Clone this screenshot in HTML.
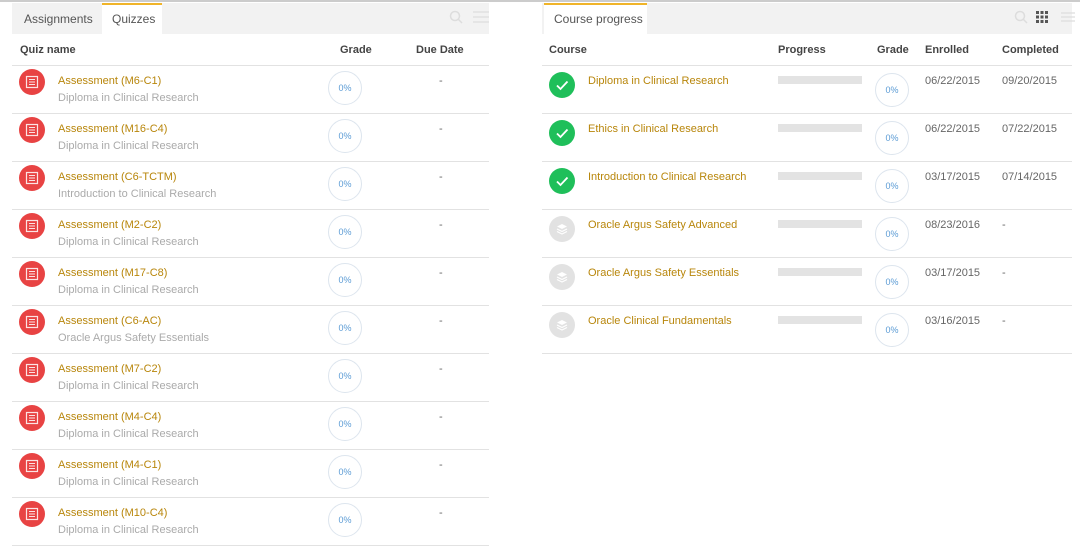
<!DOCTYPE html>
<html><head><meta charset="utf-8"><style>
*{box-sizing:border-box;margin:0;padding:0}
body{width:1080px;height:548px;background:#fff;font-family:"Liberation Sans",sans-serif;position:relative;overflow:hidden;color:#555}
.topline{position:absolute;left:0;top:0;width:1080px;height:2px;background:#ccc}
.abs{position:absolute}
.tabbar{position:absolute;top:3px;height:31px;background:#f2f2f2}
.tab{position:absolute;top:3px;height:31px;font-size:12px;color:#555;line-height:33px;padding-left:10px}
.tab.act{background:#fff;border-top:2px solid #f0b429;line-height:29px}
.th{position:absolute;font-size:11px;font-weight:bold;color:#444;top:44px}
.hr{position:absolute;height:1px;background:#e2e2e2}
.t{position:absolute;font-size:11px;color:#b8860b;white-space:nowrap}
.s{position:absolute;font-size:11px;color:#aaa;white-space:nowrap}
.d{position:absolute;font-size:11px;color:#666;white-space:nowrap}
.g{position:absolute;width:34px;height:34px;border-radius:50%;border:1px solid #dde5ee;font-size:9px;color:#5b9bd5;text-align:center;line-height:32px}
.ic{position:absolute;width:26px;height:26px;border-radius:50%}
.bar{position:absolute;width:84px;height:8px;background:#e3e3e3}
</style></head><body>
<div class="topline"></div>
<div class="tabbar" style="left:12px;width:477px"></div>
<div class="tab" style="left:12px;width:90px;padding-left:12px">Assignments</div>
<div class="tab act" style="left:102px;width:60px">Quizzes</div>
<svg class="abs" style="left:449px;top:10px" width="14" height="14"><circle cx="6" cy="6" r="4.5" fill="none" stroke="#ddd" stroke-width="1.5"/><line x1="9.5" y1="9.5" x2="13" y2="13" stroke="#ddd" stroke-width="1.5"/></svg>
<svg class="abs" style="left:473px;top:10px" width="16" height="14"><path d="M0 2h16M0 7h16M0 12h16" stroke="#ddd" stroke-width="1.2"/></svg>
<div class="th" style="left:20px">Quiz name</div>
<div class="th" style="left:340px">Grade</div>
<div class="th" style="left:416px">Due Date</div>
<div class="hr" style="left:12px;width:477px;top:65px"></div>

<div class="tabbar" style="left:542px;width:530px"></div>
<div class="tab act" style="left:544px;width:103px">Course progress</div>
<svg class="abs" style="left:1014px;top:10px" width="14" height="14"><circle cx="6" cy="6" r="4.5" fill="none" stroke="#ddd" stroke-width="1.5"/><line x1="9.5" y1="9.5" x2="13" y2="13" stroke="#ddd" stroke-width="1.5"/></svg>
<svg class="abs" style="left:1036px;top:11px" width="12" height="12" fill="#555"><rect x="0" y="0" width="3" height="3"/><rect x="4.5" y="0" width="3" height="3"/><rect x="9" y="0" width="3" height="3"/><rect x="0" y="4.5" width="3" height="3"/><rect x="4.5" y="4.5" width="3" height="3"/><rect x="9" y="4.5" width="3" height="3"/><rect x="0" y="9" width="3" height="3"/><rect x="4.5" y="9" width="3" height="3"/><rect x="9" y="9" width="3" height="3"/></svg>
<svg class="abs" style="left:1061px;top:10px" width="14" height="14"><path d="M0 3h14M0 7h14M0 11h14" stroke="#ddd" stroke-width="1.2"/></svg>
<div class="th" style="left:549px">Course</div>
<div class="th" style="left:778px">Progress</div>
<div class="th" style="left:877px">Grade</div>
<div class="th" style="left:925px">Enrolled</div>
<div class="th" style="left:1002px">Completed</div>
<div class="hr" style="left:542px;width:530px;top:65px"></div>

<div id="q"></div>
<script>
var q=[["Assessment (M6-C1)","Diploma in Clinical Research"],["Assessment (M16-C4)","Diploma in Clinical Research"],["Assessment (C6-TCTM)","Introduction to Clinical Research"],["Assessment (M2-C2)","Diploma in Clinical Research"],["Assessment (M17-C8)","Diploma in Clinical Research"],["Assessment (C6-AC)","Oracle Argus Safety Essentials"],["Assessment (M7-C2)","Diploma in Clinical Research"],["Assessment (M4-C4)","Diploma in Clinical Research"],["Assessment (M4-C1)","Diploma in Clinical Research"],["Assessment (M10-C4)","Diploma in Clinical Research"]];
var h="";
q.forEach(function(r,i){var y=65+i*48;
h+='<div class="ic" style="left:19px;top:'+(y+4)+'px;background:#e84343"><svg width="26" height="26"><rect x="7.5" y="7.5" width="11" height="11" fill="none" stroke="#fff" stroke-width="1.2" opacity=".85"/><path d="M10 10.5h6M10 13h6M10 15.5h6" stroke="#fff" stroke-width="1" opacity=".85"/></svg></div>';
h+='<div class="t" style="left:58px;top:'+(y+10)+'px">'+r[0]+'</div>';
h+='<div class="s" style="left:58px;top:'+(y+27)+'px">'+r[1]+'</div>';
h+='<div class="g" style="left:328px;top:'+(y+6)+'px">0%</div>';
h+='<div class="d" style="left:439px;top:'+(y+10)+'px">-</div>';
h+='<div class="hr" style="left:12px;width:477px;top:'+(y+48)+'px"></div>';});
var c=[["Diploma in Clinical Research","06/22/2015","09/20/2015",1],["Ethics in Clinical Research","06/22/2015","07/22/2015",1],["Introduction to Clinical Research","03/17/2015","07/14/2015",1],["Oracle Argus Safety Advanced","08/23/2016","-",0],["Oracle Argus Safety Essentials","03/17/2015","-",0],["Oracle Clinical Fundamentals","03/16/2015","-",0]];
c.forEach(function(r,i){var y=65+i*48;
if(r[3])h+='<div class="ic" style="left:549px;top:'+(y+7)+'px;background:#1fbf5a"><svg width="26" height="26"><path d="M8 13.5l3.5 3.5 7-7.5" fill="none" stroke="#fff" stroke-width="1.8"/></svg></div>';
else h+='<div class="ic" style="left:549px;top:'+(y+7)+'px;background:#e2e2e2"><svg width="26" height="26"><path d="M13 8l5 2.5-5 2.5-5-2.5z" fill="#fff"/><path d="M8 13l5 2.5 5-2.5M8 15.5l5 2.5 5-2.5" fill="none" stroke="#fff" stroke-width="1.2"/></svg></div>';
h+='<div class="t" style="left:588px;top:'+(y+10)+'px">'+r[0]+'</div>';
h+='<div class="bar" style="left:778px;top:'+(y+11)+'px"></div>';
h+='<div class="g" style="left:875px;top:'+(y+8)+'px">0%</div>';
h+='<div class="d" style="left:925px;top:'+(y+10)+'px">'+r[1]+'</div>';
h+='<div class="d" style="left:1002px;top:'+(y+10)+'px">'+r[2]+'</div>';
h+='<div class="hr" style="left:542px;width:530px;top:'+(y+48)+'px"></div>';});
document.getElementById("q").innerHTML=h;
</script>
</body></html>
